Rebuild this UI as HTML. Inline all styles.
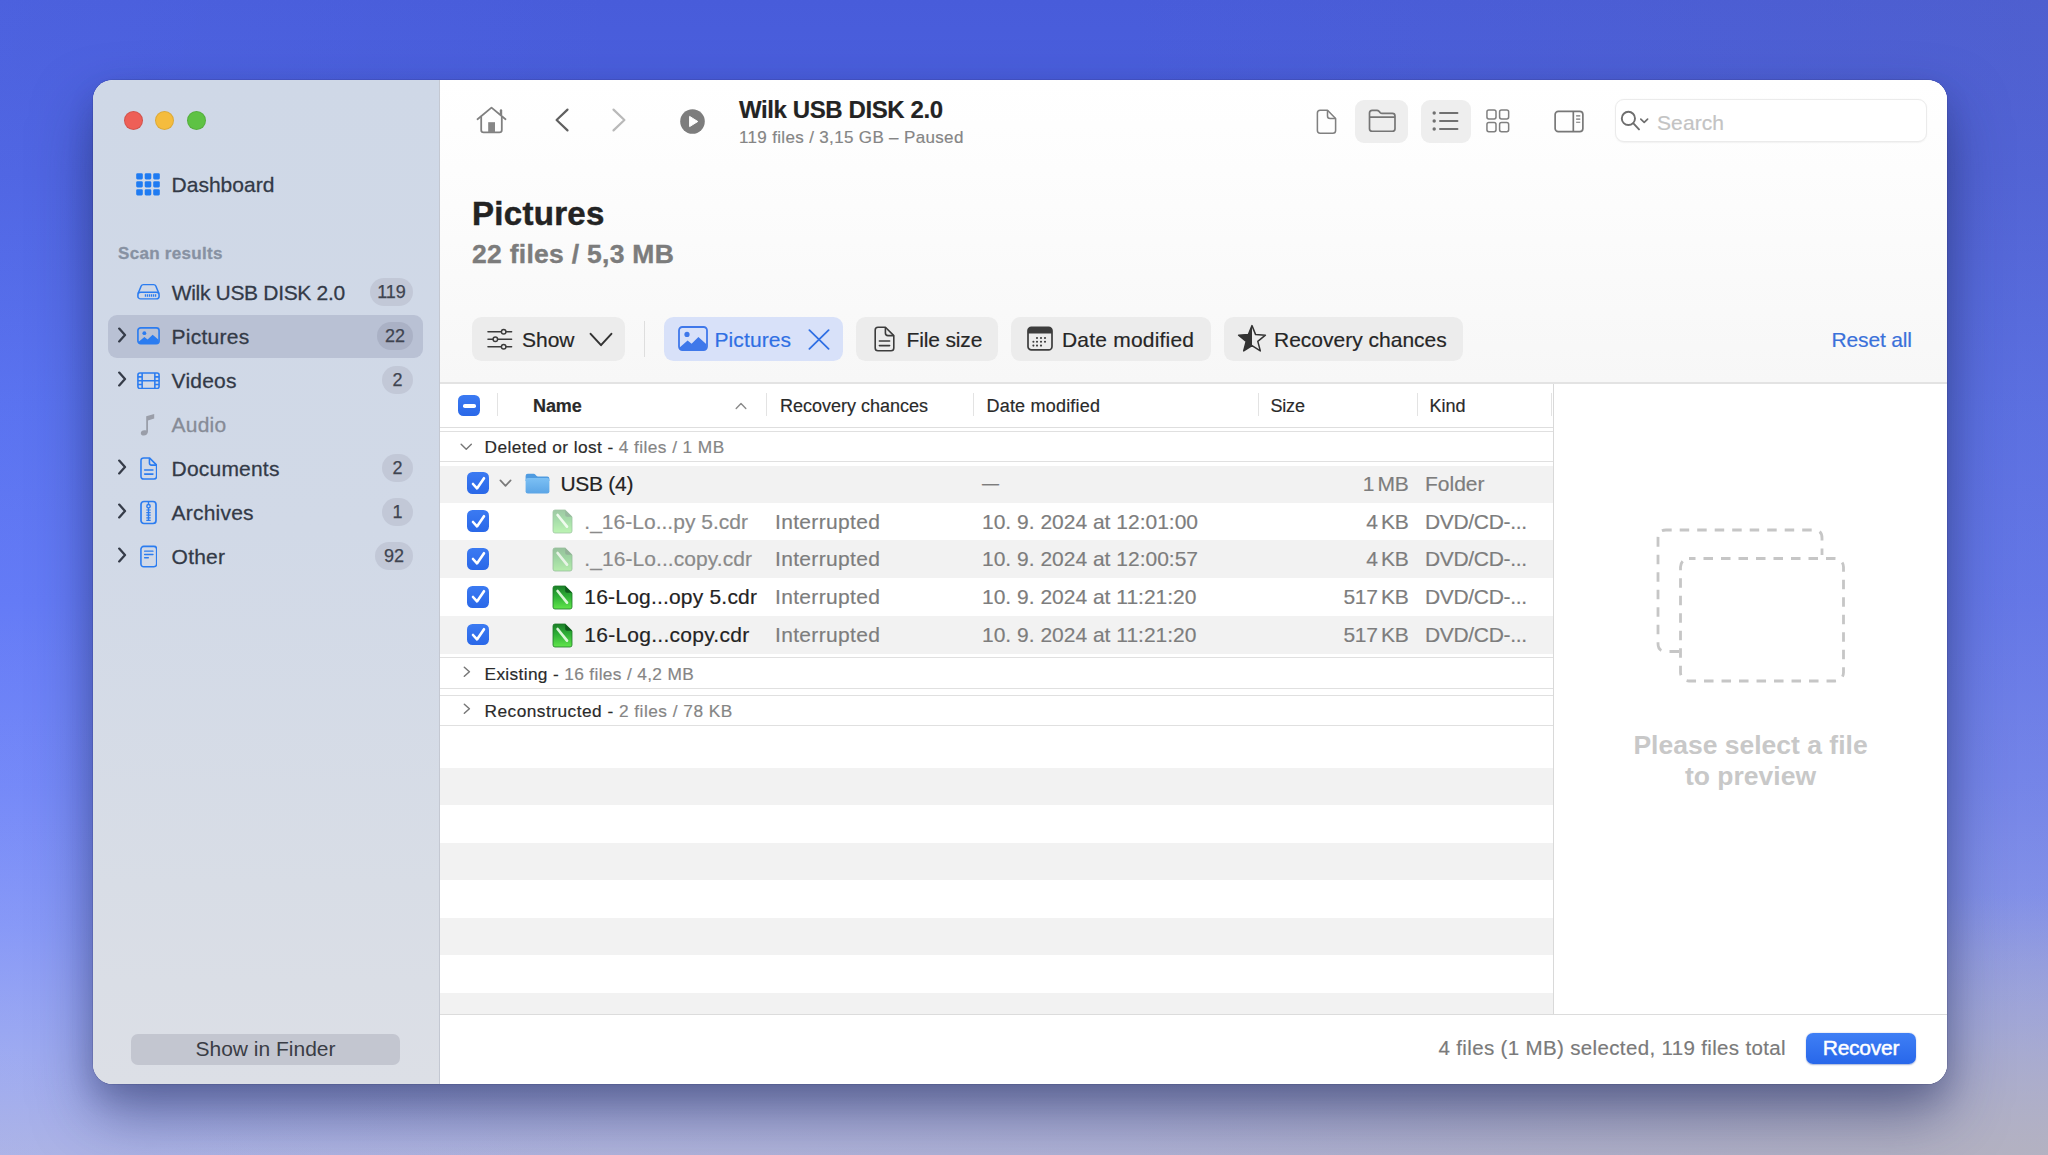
<!DOCTYPE html>
<html lang="en">
<head>
<meta charset="utf-8">
<title>Disk Drill – Pictures</title>
<style>
*{box-sizing:border-box;margin:0;padding:0}
html,body{width:2048px;height:1155px;overflow:hidden}
body{font-family:"Liberation Sans",sans-serif;position:relative;color:#262626;
 background:
  radial-gradient(ellipse 1900px 260px at 100% 100%, rgba(180,178,192,.95), rgba(174,174,200,.5) 50%, rgba(172,174,206,0) 100%),
  linear-gradient(90deg, rgba(110,140,255,.10) 0%, rgba(110,140,255,0) 30%, rgba(110,110,150,0) 55%, rgba(110,110,150,.16) 100%),
  linear-gradient(180deg,#485cda 0%,#4d62e0 15%,#5870ee 35%,#6379f5 52%,#7689f7 68%,#8a9af6 80%,#a2adf0 91%,#b3b8e4 100%);}
.abs{position:absolute}
.t{position:absolute;white-space:nowrap;line-height:1;transform-origin:0 50%}
#win{position:absolute;left:93px;top:80px;width:1854px;height:1004px;border-radius:20px;overflow:hidden;background:#fff;
 box-shadow:0 30px 58px rgba(30,40,90,.50),0 12px 26px rgba(30,40,90,.16),0 0 0 1px rgba(40,40,90,.15)}
#side{position:absolute;left:0;top:0;width:347px;height:1004px;background:linear-gradient(180deg,#cfd8e7 0%,#d1d9e7 45%,#d8dde6 80%,#dcdfe6 100%);border-right:1px solid #c4c8d2}
#main{position:absolute;left:347px;top:0;width:1507px;height:1004px;background:#fff}
#head{position:absolute;left:0;top:0;width:1507px;height:304px;background:linear-gradient(180deg,#ffffff 0%,#fdfdfd 30%,#f7f7f7 100%);border-bottom:2px solid #e3e3e3}
.bdg{position:absolute;right:26px;height:28px;border-radius:14px;background:#c2c8d7;color:#3f4450;font-size:18px;line-height:28.5px;text-align:center;-webkit-text-stroke:.25px #3f4450}
#side .t{-webkit-text-stroke:.28px currentColor}
#main .t{-webkit-text-stroke:.18px currentColor}
.chev{position:absolute;left:24px}
.chip{position:absolute;top:237.4px;height:43.8px;border-radius:9.5px;background:#ececec}
</style>
</head>
<body>
<div id="win">
 <div id="side">
  <div class="abs" style="left:31.2px;top:30.8px;width:19px;height:19px;border-radius:50%;background:#ee5f57;box-shadow:inset 0 0 0 1px rgba(0,0,0,.12)"></div>
  <div class="abs" style="left:62.3px;top:30.8px;width:19px;height:19px;border-radius:50%;background:#f5bc3d;box-shadow:inset 0 0 0 1px rgba(0,0,0,.10)"></div>
  <div class="abs" style="left:94.2px;top:30.8px;width:19px;height:19px;border-radius:50%;background:#5ec244;box-shadow:inset 0 0 0 1px rgba(0,0,0,.10)"></div>

  <svg class="abs" style="left:43px;top:93px" width="24" height="23" viewBox="0 0 24 23"><g fill="#1f7bf2">
   <rect x="0.2" y="0.2" width="6.6" height="6.2" rx="1.3"/><rect x="8.7" y="0.2" width="6.6" height="6.2" rx="1.3"/><rect x="17.2" y="0.2" width="6.6" height="6.2" rx="1.3"/>
   <rect x="0.2" y="8.2" width="6.6" height="6.2" rx="1.3"/><rect x="8.7" y="8.2" width="6.6" height="6.2" rx="1.3"/><rect x="17.2" y="8.2" width="6.6" height="6.2" rx="1.3"/>
   <rect x="0.2" y="16.2" width="6.6" height="6.2" rx="1.3"/><rect x="8.7" y="16.2" width="6.6" height="6.2" rx="1.3"/><rect x="17.2" y="16.2" width="6.6" height="6.2" rx="1.3"/></g></svg>
  <span class="t" style="left:78.6px;top:94px;font-size:21px;color:#333a47">Dashboard</span>

  <span class="t" style="left:25px;top:165px;font-size:17px;font-weight:700;color:#8791a2;letter-spacing:.3px">Scan results</span>

  <div class="abs" style="left:15px;top:235px;width:315px;height:43px;border-radius:9px;background:#b9c1d4"></div>

  <!-- row: Wilk USB DISK -->
  <svg class="abs" style="left:44px;top:203.3px" width="23" height="17.6" viewBox="0 0 25 22" preserveAspectRatio="none" fill="none" stroke="#2b7cf0" stroke-width="1.7" stroke-linejoin="round"><path d="M1.2 13.2 L4.6 3.6 Q5.2 2 6.9 2 H18.1 Q19.8 2 20.4 3.6 L23.8 13.2"/><rect x="1" y="11.6" width="23" height="8.2" rx="3"/><g stroke-width="1.4"><path d="M9.2 14.2v3M11.4 14.2v3M13.6 14.2v3M15.8 14.2v3M18 14.2v3M20.2 14.2v3"/></g></svg>
  <span class="t" style="left:78.7px;top:202px;font-size:21px;color:#333a47;letter-spacing:-.32px">Wilk USB DISK 2.0</span>
  <span class="bdg" style="width:43px;top:198px">119</span>

  <!-- Pictures -->
  <svg class="chev" style="top:246.5px" width="10" height="16" viewBox="0 0 10 16"><path d="M2.2 1.6 L8 8 L2.2 14.4" fill="none" stroke="#363c49" stroke-width="2.3" stroke-linecap="round" stroke-linejoin="round"/></svg>
  <svg class="abs" style="left:44px;top:247.3px" width="23" height="17.6" viewBox="0 0 25 20" preserveAspectRatio="none"><rect x="1" y="1" width="23" height="18" rx="3" fill="none" stroke="#2b7cf0" stroke-width="1.8"/><circle cx="8" cy="7" r="2.1" fill="#2b7cf0"/><path d="M1.5 17 L8 11.5 L11.5 14.2 L17 8.8 L23.5 14.5 V17.5 Q23.5 18.5 22.5 18.5 H2.5 Q1.5 18.5 1.5 17Z" fill="#2b7cf0"/></svg>
  <span class="t" style="left:78.6px;top:246px;font-size:21px;color:#333a47;letter-spacing:.25px">Pictures</span>
  <span class="bdg" style="width:36px;top:242px;background:#aab1c5">22</span>

  <!-- Videos -->
  <svg class="chev" style="top:290.5px" width="10" height="16" viewBox="0 0 10 16"><path d="M2.2 1.6 L8 8 L2.2 14.4" fill="none" stroke="#363c49" stroke-width="2.3" stroke-linecap="round" stroke-linejoin="round"/></svg>
  <svg class="abs" style="left:44px;top:291.7px" width="23" height="17.4" viewBox="0 0 25 19" preserveAspectRatio="none" fill="none" stroke="#2b7cf0" stroke-width="1.7"><rect x="1" y="1" width="23" height="17" rx="2.2"/><path d="M5.6 1v17M19.4 1v17M5.6 9.5h13.8M1 5.3h4.6M1 9.5h4.6M1 13.7h4.6M19.4 5.3h4.6M19.4 9.5h4.6M19.4 13.7h4.6"/></svg>
  <span class="t" style="left:78.6px;top:290px;font-size:21px;color:#333a47;letter-spacing:.2px">Videos</span>
  <span class="bdg" style="width:31px;top:286px">2</span>

  <!-- Audio -->
  <svg class="abs" style="left:47px;top:333px" width="16" height="24" viewBox="0 0 16 24"><path d="M6.2 3.2 L14.2 1 V5.6 L8 7.4 V18.2 C8 21 6 22.6 3.8 22.6 C2 22.6 0.8 21.6 0.8 20.2 C0.8 18.4 2.4 17.2 4.4 17.2 C5.2 17.2 5.8 17.3 6.2 17.5 Z" fill="#9a9ea9"/></svg>
  <span class="t" style="left:78.6px;top:334px;font-size:21px;color:#868b96;letter-spacing:.2px">Audio</span>

  <!-- Documents -->
  <svg class="chev" style="top:378.5px" width="10" height="16" viewBox="0 0 10 16"><path d="M2.2 1.6 L8 8 L2.2 14.4" fill="none" stroke="#363c49" stroke-width="2.3" stroke-linecap="round" stroke-linejoin="round"/></svg>
  <svg class="abs" style="left:46.6px;top:377px" width="17.6" height="23" viewBox="0 0 19 25" fill="none" stroke="#2b7cf0" stroke-width="1.7" stroke-linejoin="round"><path d="M1 4 Q1 1 4 1 H10.2 L18 8.8 V21 Q18 24 15 24 H4 Q1 24 1 21Z"/><path d="M10.2 1 V6.6 Q10.2 8.8 12.4 8.8 H18"/><path d="M5 14.2h9M5 18.6h9" stroke-linecap="round"/></svg>
  <span class="t" style="left:78.6px;top:378px;font-size:21px;color:#333a47;letter-spacing:.2px">Documents</span>
  <span class="bdg" style="width:31px;top:374px">2</span>

  <!-- Archives -->
  <svg class="chev" style="top:422.5px" width="10" height="16" viewBox="0 0 10 16"><path d="M2.2 1.6 L8 8 L2.2 14.4" fill="none" stroke="#363c49" stroke-width="2.3" stroke-linecap="round" stroke-linejoin="round"/></svg>
  <svg class="abs" style="left:47px;top:420px" width="17" height="25" viewBox="0 0 17 25" fill="none" stroke="#2b7cf0" stroke-width="1.7"><rect x="1" y="1.5" width="15" height="22" rx="3"/><circle cx="8.5" cy="6.2" r="1.7" stroke-width="1.4"/><path d="M8.5 1.5v3M8.5 8v12.5" stroke-width="1.4"/><path d="M6.3 10h4.4M6.3 12.6h4.4M6.3 15.2h4.4M6.3 17.8h4.4M6.3 20.4h4.4" stroke-width="1.2"/></svg>
  <span class="t" style="left:78.6px;top:422px;font-size:21px;color:#333a47;letter-spacing:.2px">Archives</span>
  <span class="bdg" style="width:31px;top:418px">1</span>

  <!-- Other -->
  <svg class="chev" style="top:466.5px" width="10" height="16" viewBox="0 0 10 16"><path d="M2.2 1.6 L8 8 L2.2 14.4" fill="none" stroke="#363c49" stroke-width="2.3" stroke-linecap="round" stroke-linejoin="round"/></svg>
  <svg class="abs" style="left:46.6px;top:464.6px" width="17.6" height="23.2" viewBox="0 0 19 25" fill="none" stroke="#2b7cf0" stroke-width="1.7"><rect x="1" y="1.5" width="17" height="22" rx="3"/><path d="M5 6.6h9M5 10.2h9M5 13.8h4" stroke-width="1.5" stroke-linecap="round"/></svg>
  <span class="t" style="left:78.6px;top:466px;font-size:21px;color:#333a47;letter-spacing:.2px">Other</span>
  <span class="bdg" style="width:38px;top:462px">92</span>

  <div class="abs" style="left:38px;top:954px;width:269px;height:31px;border-radius:7px;background:#c3c6d0;text-align:center;font-size:21px;line-height:30px;color:#3a3d45">Show in Finder</div>
 </div>
 <div id="main">
  <div id="head">
   <!-- home -->
   <svg class="abs" style="left:36px;top:26px" width="31" height="28" viewBox="0 0 31 28" fill="none" stroke="#808080" stroke-width="1.8" stroke-linejoin="round" stroke-linecap="round"><path d="M1.5 13.2 L15.5 1.6 L29.5 13.2"/><path d="M5.2 10.6 V24 Q5.2 26.4 7.6 26.4 H23.4 Q25.8 26.4 25.8 24 V10.6"/><path d="M25 8.6 V4.4" stroke-width="2.4"/><rect x="12.2" y="16.2" width="6.8" height="10.2" fill="#868686" stroke="none"/></svg>
   <!-- back / fwd -->
   <svg class="abs" style="left:114px;top:28px" width="16" height="24" viewBox="0 0 16 24"><path d="M13.5 1.6 L2.6 12 L13.5 22.4" fill="none" stroke="#606060" stroke-width="2.2" stroke-linecap="round" stroke-linejoin="round"/></svg>
   <svg class="abs" style="left:171px;top:28px" width="16" height="24" viewBox="0 0 16 24"><path d="M2.5 1.6 L13.4 12 L2.5 22.4" fill="none" stroke="#b9b9b9" stroke-width="2.2" stroke-linecap="round" stroke-linejoin="round"/></svg>
   <!-- play -->
   <svg class="abs" style="left:240px;top:28.5px" width="25" height="25" viewBox="0 0 25 25"><circle cx="12.5" cy="12.5" r="12.3" fill="#7d7d7d"/><path d="M9.6 7.4 L17.8 12.5 L9.6 17.6Z" fill="#fff" stroke="#fff" stroke-width="1" stroke-linejoin="round"/></svg>
   <span class="t" style="left:299px;top:18px;font-size:24px;font-weight:700;color:#232323;letter-spacing:-.4px">Wilk USB DISK 2.0</span>
   <span class="t" style="left:299px;top:49.3px;font-size:17px;color:#858585;letter-spacing:.34px">119 files / 3,15 GB – Paused</span>

   <!-- right icons -->
   <svg class="abs" style="left:876px;top:28.5px" width="21" height="25.5" viewBox="0 0 23 28" fill="none" stroke="#808080" stroke-width="1.7" stroke-linejoin="round"><path d="M1.5 4.4 Q1.5 1.4 4.5 1.4 H12.6 L21.5 10.4 V23.6 Q21.5 26.6 18.5 26.6 H4.5 Q1.5 26.6 1.5 23.6Z"/><path d="M12.6 1.4 V7.6 Q12.6 10.4 15.4 10.4 H21.5"/></svg>
   <div class="abs" style="left:915px;top:19.5px;width:53px;height:43px;border-radius:9px;background:#eeeeee"></div>
   <svg class="abs" style="left:927.5px;top:29.2px" width="28.5" height="23.6" viewBox="0 0 30 25" fill="none" stroke="#757575" stroke-width="1.8" stroke-linejoin="round"><path d="M1.5 7.4 V4.2 Q1.5 1.4 4.3 1.4 H9.4 Q10.6 1.4 11.4 2.3 L12.8 3.8 Q13.6 4.6 14.8 4.6 H25.7 Q28.5 4.6 28.5 7.4 V20.8 Q28.5 23.6 25.7 23.6 H4.3 Q1.5 23.6 1.5 20.8Z"/><path d="M1.5 8.6 H28.5"/></svg>
   <div class="abs" style="left:981px;top:19.5px;width:50px;height:43px;border-radius:9px;background:#eeeeee"></div>
   <svg class="abs" style="left:992px;top:30px" width="27" height="22" viewBox="0 0 27 22" fill="none" stroke="#707070" stroke-width="1.9" stroke-linecap="round"><path d="M8 3h17.5M8 11h17.5M8 19h17.5"/><g fill="#707070" stroke="none"><circle cx="2.2" cy="3" r="1.7"/><circle cx="2.2" cy="11" r="1.7"/><circle cx="2.2" cy="19" r="1.7"/></g></svg>
   <svg class="abs" style="left:1046.2px;top:29.2px" width="23.6" height="23.6" viewBox="0 0 25 25" fill="none" stroke="#808080" stroke-width="1.6"><rect x="1" y="1" width="9.6" height="9.6" rx="2"/><rect x="14.4" y="1" width="9.6" height="9.6" rx="2"/><rect x="1" y="14.4" width="9.6" height="9.6" rx="2"/><rect x="14.4" y="14.4" width="9.6" height="9.6" rx="2"/></svg>
   <svg class="abs" style="left:1113.8px;top:29.6px" width="30" height="23" viewBox="0 0 32 24" fill="none" stroke="#777" stroke-width="1.8"><rect x="1.2" y="1.2" width="29.6" height="21.6" rx="3.4"/><path d="M20.6 1.2 V22.8"/><path d="M23.6 6h4.4M23.6 9.4h4.4M23.6 12.8h4.4" stroke-width="1.3"/></svg>
   <!-- search -->
   <div class="abs" style="left:1175px;top:19px;width:312px;height:43px;border-radius:9px;background:#fff;border:1.5px solid #ebebeb;box-shadow:0 .5px 1.5px rgba(0,0,0,.05)"></div>
   <svg class="abs" style="left:1180px;top:30px" width="30" height="22" viewBox="0 0 30 22" fill="none" stroke="#6e6e6e" stroke-width="1.9" stroke-linecap="round" stroke-linejoin="round"><circle cx="8.4" cy="8.4" r="6.6"/><path d="M13.4 13.4 L19 19.4"/><path d="M20.8 9.2 L24.2 12.4 L27.6 9.2" stroke-width="1.7"/></svg>
   <span class="t" style="left:1217px;top:32px;font-size:21px;color:#c3c3c3;letter-spacing:.1px">Search</span>

   <span class="t" style="left:32px;top:117px;font-size:33px;font-weight:700;color:#232323;letter-spacing:.3px;-webkit-text-stroke:.5px #232323">Pictures</span>
   <span class="t" style="left:32px;top:161px;font-size:26.5px;font-weight:700;color:#7c7c7c;letter-spacing:.28px;-webkit-text-stroke:.4px #7c7c7c">22 files / 5,3 MB</span>

   <!-- chips -->
   <div class="chip" style="left:32px;width:153px"></div>
   <svg class="abs" style="left:47px;top:248px" width="25.6" height="22.6" viewBox="0 0 27 23" fill="none" stroke="#3c3c3c" stroke-width="1.5" stroke-linecap="round"><path d="M1 3.6h14.2M20 3.6h6M1 11.5h5.4M11.2 11.5H26M1 19.4h14.2M20 19.4h6"/><circle cx="17.6" cy="3.6" r="2.4"/><circle cx="8.8" cy="11.5" r="2.4"/><circle cx="17.6" cy="19.4" r="2.4"/></svg>
   <span class="t" style="left:82px;top:249.3px;font-size:21px;color:#262626">Show</span>
   <svg class="abs" style="left:149px;top:252px" width="24" height="16" viewBox="0 0 24 16"><path d="M1.6 1.8 L12 13.2 L22.4 1.8" fill="none" stroke="#333" stroke-width="2" stroke-linecap="round" stroke-linejoin="round"/></svg>
   <div class="abs" style="left:203.5px;top:241px;width:1.5px;height:36px;background:#dedede"></div>

   <div class="chip" style="left:224px;width:179px;background:#d8e1f9"></div>
   <svg class="abs" style="left:238px;top:246px" width="30" height="25" viewBox="0 0 30 25"><rect x="1" y="1" width="28" height="23" rx="3.4" fill="none" stroke="#3f78ea" stroke-width="1.8"/><circle cx="9" cy="8.4" r="2.6" fill="#3f78ea"/><path d="M1.6 21.4 L9.6 14.4 L13.6 17.8 L20.4 11 L28.4 18.2 V21.4 Q28.4 23.4 26.4 23.4 H3.6 Q1.6 23.4 1.6 21.4Z" fill="#3f78ea"/></svg>
   <span class="t" style="left:274.5px;top:249.3px;font-size:21px;color:#2f6fe4;letter-spacing:.1px">Pictures</span>
   <svg class="abs" style="left:368px;top:249px" width="22" height="21" viewBox="0 0 22 21"><path d="M1.4 1.2 L20.6 19.8 M20.6 1.2 L1.4 19.8" fill="none" stroke="#2f6fe4" stroke-width="1.8" stroke-linecap="round"/></svg>

   <div class="chip" style="left:416px;width:142px"></div>
   <svg class="abs" style="left:433.5px;top:246px" width="21" height="26" viewBox="0 0 21 26" fill="none" stroke="#3c3c3c" stroke-width="1.6" stroke-linejoin="round"><path d="M1.2 4 Q1.2 1.2 4 1.2 H11.4 L19.8 9.6 V22 Q19.8 24.8 17 24.8 H4 Q1.2 24.8 1.2 22Z"/><path d="M11.4 1.2 V7 Q11.4 9.6 14 9.6 H19.8"/><path d="M5.4 15h10.2M5.4 19.6h10.2" stroke-linecap="round"/></svg>
   <span class="t" style="left:466.5px;top:249.3px;font-size:21px;color:#262626;letter-spacing:-.15px">File size</span>

   <div class="chip" style="left:571px;width:200px"></div>
   <svg class="abs" style="left:587px;top:246px" width="26" height="25" viewBox="0 0 26 25"><rect x="1" y="1.4" width="24" height="22.4" rx="3.4" fill="none" stroke="#3c3c3c" stroke-width="1.7"/><path d="M1 7.6 V4.6 Q1 1.4 4.2 1.4 H21.8 Q25 1.4 25 4.6 V7.6Z" fill="#3c3c3c"/><g fill="#3c3c3c"><circle cx="10" cy="12" r="1.05"/><circle cx="14" cy="12" r="1.05"/><circle cx="18" cy="12" r="1.05"/><circle cx="22" cy="12" r="1.05" opacity="0"/><circle cx="6.4" cy="15.8" r="1.05"/><circle cx="10" cy="15.8" r="1.05"/><circle cx="14" cy="15.8" r="1.05"/><circle cx="18" cy="15.8" r="1.05"/><circle cx="6.4" cy="19.6" r="1.05"/><circle cx="10" cy="19.6" r="1.05"/><circle cx="14" cy="19.6" r="1.05"/></g></svg>
   <span class="t" style="left:622px;top:249.3px;font-size:21px;color:#262626;letter-spacing:.2px">Date modified</span>

   <div class="chip" style="left:784px;width:239px"></div>
   <svg class="abs" style="left:797px;top:244px" width="30" height="29" viewBox="0 0 30 29"><path d="M15 1.6 L18.6 10.6 L28.4 11.2 L20.8 17.4 L23.3 26.9 L15 21.6 L6.7 26.9 L9.2 17.4 L1.6 11.2 L11.4 10.6Z" fill="none" stroke="#333" stroke-width="1.5" stroke-linejoin="round"/><path d="M15 1.6 L15 21.6 L6.7 26.9 L9.2 17.4 L1.6 11.2 L11.4 10.6Z" fill="#333"/></svg>
   <span class="t" style="left:834px;top:249.3px;font-size:21px;color:#262626">Recovery chances</span>

   <span class="t" style="left:1391.5px;top:249px;font-size:21px;color:#3a71da;letter-spacing:-.15px">Reset all</span>
  </div>
  <div class="abs" style="left:0;top:304px;width:1113px;height:630px;background:#fff"></div>
  <div class="abs" style="left:1113px;top:304px;width:1px;height:630px;background:#d9d9d9"></div>
  <div class="abs" style="left:0;top:346.5px;width:1113px;height:1px;background:#dedede"></div>
  <div class="abs" style="left:18px;top:314.5px;width:21.5px;height:21.5px;border-radius:5.5px;background:linear-gradient(180deg,#3b7af2,#2a68e8)"></div>
  <div class="abs" style="left:22.5px;top:324px;width:13.5px;height:3.6px;border-radius:1.8px;background:#fff"></div>
  <div class="abs" style="left:57px;top:313px;width:1px;height:23px;background:#e3e3e3"></div>
  <div class="abs" style="left:326px;top:313px;width:1px;height:23px;background:#e3e3e3"></div>
  <div class="abs" style="left:532.5px;top:313px;width:1px;height:23px;background:#e3e3e3"></div>
  <div class="abs" style="left:817.5px;top:313px;width:1px;height:23px;background:#e3e3e3"></div>
  <div class="abs" style="left:976.5px;top:313px;width:1px;height:23px;background:#e3e3e3"></div>
  <div class="abs" style="left:1110.5px;top:313px;width:1px;height:23px;background:#e3e3e3"></div>
  <span class="t" style="left:93px;top:316.5px;font-size:18px;font-weight:700;color:#2a2a2a;letter-spacing:-.1px">Name</span>
  <svg class="abs" style="left:295px;top:321.8px" width="12" height="8" viewBox="0 0 12 8"><path d="M1.2 6.4 L6 1.6 L10.8 6.4" fill="none" stroke="#8a8a8a" stroke-width="1.4" stroke-linecap="round" stroke-linejoin="round"/></svg>
  <span class="t" style="left:340px;top:316.5px;font-size:18px;color:#2a2a2a">Recovery chances</span>
  <span class="t" style="left:546.5px;top:316.5px;font-size:18px;color:#2a2a2a;letter-spacing:.2px">Date modified</span>
  <span class="t" style="left:830.5px;top:316.5px;font-size:18px;color:#2a2a2a;letter-spacing:-.2px">Size</span>
  <span class="t" style="left:989.5px;top:316.5px;font-size:18px;color:#2a2a2a">Kind</span>
  <div class="abs" style="left:0;top:350.5px;width:1113px;height:1px;background:#e0e0e0"></div>
  <div class="abs" style="left:0;top:381px;width:1113px;height:1px;background:#e0e0e0"></div>
  <svg class="abs" style="left:19.5px;top:362.5px" width="12.5" height="7.6" viewBox="0 0 15 9"><path d="M1.4 1.4 L7.5 7.4 L13.6 1.4" fill="none" stroke="#777" stroke-width="1.7" stroke-linecap="round" stroke-linejoin="round"/></svg>
  <span class="t" style="left:44.5px;top:359.1px;font-size:17.3px;color:#2a2a2a;letter-spacing:.42px">Deleted or lost - <span style="color:#858585">4 files / 1 MB</span></span>
  <div class="abs" style="left:0;top:385.5px;width:1113px;height:37px;background:#f2f2f2"></div>
  <div class="abs" style="left:0;top:460px;width:1113px;height:38px;background:#f2f2f2"></div>
  <div class="abs" style="left:0;top:536px;width:1113px;height:38px;background:#f2f2f2"></div>
  <div class="abs" style="left:27px;top:392.40000000000003px;width:21.5px;height:21.5px;border-radius:5.5px;background:linear-gradient(180deg,#3b7af2,#2a68e8)"></div>
  <svg class="abs" style="left:30px;top:394.6px" width="17" height="17" viewBox="0 0 17 17"><path d="M3 9 L7 13.4 L14 3.2" fill="none" stroke="#fff" stroke-width="2.6" stroke-linecap="round" stroke-linejoin="round"/></svg>
  <div class="abs" style="left:27px;top:430.3px;width:21.5px;height:21.5px;border-radius:5.5px;background:linear-gradient(180deg,#3b7af2,#2a68e8)"></div>
  <svg class="abs" style="left:30px;top:432.5px" width="17" height="17" viewBox="0 0 17 17"><path d="M3 9 L7 13.4 L14 3.2" fill="none" stroke="#fff" stroke-width="2.6" stroke-linecap="round" stroke-linejoin="round"/></svg>
  <div class="abs" style="left:27px;top:468.1px;width:21.5px;height:21.5px;border-radius:5.5px;background:linear-gradient(180deg,#3b7af2,#2a68e8)"></div>
  <svg class="abs" style="left:30px;top:470.3px" width="17" height="17" viewBox="0 0 17 17"><path d="M3 9 L7 13.4 L14 3.2" fill="none" stroke="#fff" stroke-width="2.6" stroke-linecap="round" stroke-linejoin="round"/></svg>
  <div class="abs" style="left:27px;top:506.00000000000006px;width:21.5px;height:21.5px;border-radius:5.5px;background:linear-gradient(180deg,#3b7af2,#2a68e8)"></div>
  <svg class="abs" style="left:30px;top:508.20000000000005px" width="17" height="17" viewBox="0 0 17 17"><path d="M3 9 L7 13.4 L14 3.2" fill="none" stroke="#fff" stroke-width="2.6" stroke-linecap="round" stroke-linejoin="round"/></svg>
  <div class="abs" style="left:27px;top:543.8px;width:21.5px;height:21.5px;border-radius:5.5px;background:linear-gradient(180deg,#3b7af2,#2a68e8)"></div>
  <svg class="abs" style="left:30px;top:546px" width="17" height="17" viewBox="0 0 17 17"><path d="M3 9 L7 13.4 L14 3.2" fill="none" stroke="#fff" stroke-width="2.6" stroke-linecap="round" stroke-linejoin="round"/></svg>
  <svg class="abs" style="left:59px;top:399.1px" width="13" height="9" viewBox="0 0 13 9"><path d="M1.4 1.4 L6.5 6.8 L11.6 1.4" fill="none" stroke="#7a7a7a" stroke-width="1.7" stroke-linecap="round" stroke-linejoin="round"/></svg>
  <svg class="abs" style="left:85px;top:393.1px" width="25" height="21" viewBox="0 0 25 21"><defs><linearGradient id="fg" x1="0" y1="0" x2="0" y2="1"><stop offset="0" stop-color="#7cc0f4"/><stop offset="1" stop-color="#5ba5e6"/></linearGradient></defs><path d="M0.6 3 Q0.6 0.8 2.8 0.8 H8.6 Q9.8 0.8 10.5 1.7 L11.4 2.8 Q12 3.5 13 3.5 H22.2 Q24.4 3.5 24.4 5.7 V8 H0.6Z" fill="#4f9be0"/><rect x="0.6" y="5" width="23.8" height="15.4" rx="2.2" fill="url(#fg)"/></svg>
  <span class="t" style="left:120.5px;top:392.6px;font-size:21px;color:#232323;letter-spacing:-0.3px;">USB (4)</span>
  <span class="t" style="left:542px;top:394.6px;font-size:17px;color:#7d7d7d;letter-spacing:0px;">—</span>
  <span class="t" style="right:538.5px;top:392.6px;font-size:21px;color:#7d7d7d;letter-spacing:-0.3px;word-spacing:-2px;">1 MB</span>
  <span class="t" style="left:985px;top:392.6px;font-size:21px;color:#7d7d7d;letter-spacing:0px;">Folder</span>
  <svg class="abs" style="left:112px;top:429.0px;opacity:0.42" width="21" height="25" viewBox="0 0 21 25"><defs><linearGradient id="cg0" x1="0" y1="0" x2="0" y2="1"><stop offset="0" stop-color="#1b7f28"/><stop offset=".45" stop-color="#2eb036"/><stop offset="1" stop-color="#62e64c"/></linearGradient></defs><path d="M1 3 Q1 1 3 1 H13.2 L20 7.8 V22 Q20 24 18 24 H3 Q1 24 1 22Z" fill="url(#cg0)" stroke="#1c7a26" stroke-width="0.8"/><path d="M13.2 1 L20 7.8 H15 Q13.2 7.8 13.2 6Z" fill="#0f5c1c"/><path d="M5.6 6 L15 17.6" stroke="#e4fbdf" stroke-width="2.7" stroke-linecap="round" fill="none" opacity=".95"/></svg>
  <span class="t" style="left:144.3px;top:430.5px;font-size:21px;color:#8a8a8a;letter-spacing:0.02px;">._16-Lo...py 5.cdr</span>
  <span class="t" style="left:335px;top:430.5px;font-size:21px;color:#7d7d7d;letter-spacing:0.33px;">Interrupted</span>
  <span class="t" style="left:542px;top:430.5px;font-size:21px;color:#7d7d7d;letter-spacing:0px;">10. 9. 2024 at 12:01:00</span>
  <span class="t" style="right:538.5px;top:430.5px;font-size:21px;color:#7d7d7d;letter-spacing:-0.3px;word-spacing:-2px;">4 KB</span>
  <span class="t" style="left:985px;top:430.5px;font-size:21px;color:#7d7d7d;letter-spacing:-0.33px;">DVD/CD-...</span>
  <svg class="abs" style="left:112px;top:466.8px;opacity:0.42" width="21" height="25" viewBox="0 0 21 25"><defs><linearGradient id="cg1" x1="0" y1="0" x2="0" y2="1"><stop offset="0" stop-color="#1b7f28"/><stop offset=".45" stop-color="#2eb036"/><stop offset="1" stop-color="#62e64c"/></linearGradient></defs><path d="M1 3 Q1 1 3 1 H13.2 L20 7.8 V22 Q20 24 18 24 H3 Q1 24 1 22Z" fill="url(#cg1)" stroke="#1c7a26" stroke-width="0.8"/><path d="M13.2 1 L20 7.8 H15 Q13.2 7.8 13.2 6Z" fill="#0f5c1c"/><path d="M5.6 6 L15 17.6" stroke="#e4fbdf" stroke-width="2.7" stroke-linecap="round" fill="none" opacity=".95"/></svg>
  <span class="t" style="left:144.3px;top:468.3px;font-size:21px;color:#8a8a8a;letter-spacing:0.07px;">._16-Lo...copy.cdr</span>
  <span class="t" style="left:335px;top:468.3px;font-size:21px;color:#7d7d7d;letter-spacing:0.33px;">Interrupted</span>
  <span class="t" style="left:542px;top:468.3px;font-size:21px;color:#7d7d7d;letter-spacing:0px;">10. 9. 2024 at 12:00:57</span>
  <span class="t" style="right:538.5px;top:468.3px;font-size:21px;color:#7d7d7d;letter-spacing:-0.3px;word-spacing:-2px;">4 KB</span>
  <span class="t" style="left:985px;top:468.3px;font-size:21px;color:#7d7d7d;letter-spacing:-0.33px;">DVD/CD-...</span>
  <svg class="abs" style="left:112px;top:504.70000000000005px;opacity:1" width="21" height="25" viewBox="0 0 21 25"><defs><linearGradient id="cg2" x1="0" y1="0" x2="0" y2="1"><stop offset="0" stop-color="#1b7f28"/><stop offset=".45" stop-color="#2eb036"/><stop offset="1" stop-color="#62e64c"/></linearGradient></defs><path d="M1 3 Q1 1 3 1 H13.2 L20 7.8 V22 Q20 24 18 24 H3 Q1 24 1 22Z" fill="url(#cg2)" stroke="#1c7a26" stroke-width="0.8"/><path d="M13.2 1 L20 7.8 H15 Q13.2 7.8 13.2 6Z" fill="#0f5c1c"/><path d="M5.6 6 L15 17.6" stroke="#e4fbdf" stroke-width="2.7" stroke-linecap="round" fill="none" opacity=".95"/></svg>
  <span class="t" style="left:144.3px;top:506.2px;font-size:21px;color:#232323;letter-spacing:0.2px;">16-Log...opy 5.cdr</span>
  <span class="t" style="left:335px;top:506.2px;font-size:21px;color:#7d7d7d;letter-spacing:0.33px;">Interrupted</span>
  <span class="t" style="left:542px;top:506.2px;font-size:21px;color:#7d7d7d;letter-spacing:0px;">10. 9. 2024 at 11:21:20</span>
  <span class="t" style="right:538.5px;top:506.2px;font-size:21px;color:#7d7d7d;letter-spacing:-0.3px;word-spacing:-2px;">517 KB</span>
  <span class="t" style="left:985px;top:506.2px;font-size:21px;color:#7d7d7d;letter-spacing:-0.33px;">DVD/CD-...</span>
  <svg class="abs" style="left:112px;top:542.5px;opacity:1" width="21" height="25" viewBox="0 0 21 25"><defs><linearGradient id="cg3" x1="0" y1="0" x2="0" y2="1"><stop offset="0" stop-color="#1b7f28"/><stop offset=".45" stop-color="#2eb036"/><stop offset="1" stop-color="#62e64c"/></linearGradient></defs><path d="M1 3 Q1 1 3 1 H13.2 L20 7.8 V22 Q20 24 18 24 H3 Q1 24 1 22Z" fill="url(#cg3)" stroke="#1c7a26" stroke-width="0.8"/><path d="M13.2 1 L20 7.8 H15 Q13.2 7.8 13.2 6Z" fill="#0f5c1c"/><path d="M5.6 6 L15 17.6" stroke="#e4fbdf" stroke-width="2.7" stroke-linecap="round" fill="none" opacity=".95"/></svg>
  <span class="t" style="left:144.3px;top:544.0px;font-size:21px;color:#232323;letter-spacing:0.26px;">16-Log...copy.cdr</span>
  <span class="t" style="left:335px;top:544.0px;font-size:21px;color:#7d7d7d;letter-spacing:0.33px;">Interrupted</span>
  <span class="t" style="left:542px;top:544.0px;font-size:21px;color:#7d7d7d;letter-spacing:0px;">10. 9. 2024 at 11:21:20</span>
  <span class="t" style="right:538.5px;top:544.0px;font-size:21px;color:#7d7d7d;letter-spacing:-0.3px;word-spacing:-2px;">517 KB</span>
  <span class="t" style="left:985px;top:544.0px;font-size:21px;color:#7d7d7d;letter-spacing:-0.33px;">DVD/CD-...</span>
  <div class="abs" style="left:0;top:576.5px;width:1113px;height:1px;background:#e0e0e0"></div>
  <div class="abs" style="left:0;top:607.5px;width:1113px;height:1px;background:#e0e0e0"></div>
  <svg class="abs" style="left:22.5px;top:585.5px" width="8" height="11.5" viewBox="0 0 9 13"><path d="M1.5 1.4 L7.2 6.5 L1.5 11.6" fill="none" stroke="#777" stroke-width="1.7" stroke-linecap="round" stroke-linejoin="round"/></svg>
  <span class="t" style="left:44.5px;top:585.6px;font-size:17.3px;color:#2a2a2a;letter-spacing:.35px">Existing - <span style="color:#858585">16 files / 4,2 MB</span></span>
  <div class="abs" style="left:0;top:614.5px;width:1113px;height:1px;background:#e0e0e0"></div>
  <div class="abs" style="left:0;top:644.5px;width:1113px;height:1px;background:#e0e0e0"></div>
  <svg class="abs" style="left:22.5px;top:623px" width="8" height="11.5" viewBox="0 0 9 13"><path d="M1.5 1.4 L7.2 6.5 L1.5 11.6" fill="none" stroke="#777" stroke-width="1.7" stroke-linecap="round" stroke-linejoin="round"/></svg>
  <span class="t" style="left:44.5px;top:623.1px;font-size:17.3px;color:#2a2a2a;letter-spacing:.48px">Reconstructed - <span style="color:#858585">2 files / 78 KB</span></span>
  <div class="abs" style="left:0;top:687.5px;width:1113px;height:37px;background:#f2f2f2"></div>
  <div class="abs" style="left:0;top:762.5px;width:1113px;height:37.5px;background:#f2f2f2"></div>
  <div class="abs" style="left:0;top:837.7px;width:1113px;height:37.5px;background:#f2f2f2"></div>
  <div class="abs" style="left:0;top:913px;width:1113px;height:21px;background:#f2f2f2"></div>
  <div class="abs" style="left:1114.5px;top:304px;width:392.5px;height:630px;background:#fff"></div>
  <svg class="abs" style="left:1210px;top:442px" width="200" height="166" viewBox="0 0 200 166" fill="none" stroke="#c6c6c6" stroke-width="2.8" stroke-dasharray="9.5 8"><path d="M29 129.5 H16 Q8 129.5 8 121.5 V16 Q8 8 16 8 H164 Q172 8 172 16 V33"/><rect x="30.5" y="36.5" width="163" height="122.5" rx="8.5" stroke-dashoffset="3"/></svg>
  <div class="abs" style="left:1114px;top:649.7px;width:393px;text-align:center;font-size:26.5px;font-weight:700;color:#c8c8c8;line-height:31px">Please select a file<br>to preview</div>
  <div class="abs" style="left:0;top:934px;width:1507px;height:70px;background:#fff;border-top:1.5px solid #dcdcdc"></div>
  <span class="t" style="right:161px;top:958.3px;font-size:20.5px;color:#7a7a7a;letter-spacing:.35px">4 files (1 MB) selected, 119 files total</span>
  <div class="abs" style="left:1366px;top:952.6px;width:110px;height:31px;border-radius:7px;background:linear-gradient(180deg,#3f7ff5,#2867ea);box-shadow:0 .5px 1.5px rgba(0,40,140,.35);color:#fff;font-size:21px;line-height:29px;text-align:center;letter-spacing:-.25px;-webkit-text-stroke:.45px #fff">Recover</div>
 </div>
</div>
</body>
</html>
